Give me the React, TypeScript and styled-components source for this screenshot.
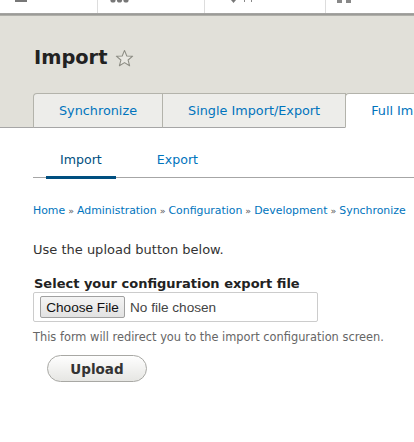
import React from 'react';
import styled, { createGlobalStyle } from 'styled-components';

const GlobalStyle = createGlobalStyle`
  html, body {
    margin: 0;
    padding: 0;
    background: #fff;
    overflow: hidden;
  }

  body {
    font-family: 'DejaVu Sans', Verdana, sans-serif;
    color: #333;
  }
`;

const Page = styled.div`
  width: 414px;
  min-height: 442px;
  overflow: hidden;
`;

// admin toolbar, scrolled so only its bottom edge shows
const Toolbar = styled.div`
  display: flex;
  height: 13px;
  background: #fff;
`;

const ToolbarItem = styled.div<{ $width: number }>`
  position: relative;
  flex: 0 0 ${(props) => props.$width}px;
  border-right: 1px solid #ddd;
  overflow: hidden;

  &:last-child {
    border-right: none;
    flex: 1;
  }

  svg {
    display: block;
  }
`;

const ToolbarShadow = styled.div`
  height: 3px;
  background: linear-gradient(#a9a9a6, #9b9b98 50%, #b9b9b2);
`;

const Header = styled.header`
  padding: 30px 0 0 33px;
  background: #e1e0d9;
  border-bottom: 1px solid #a6a6a6;
`;

const Title = styled.h1`
  display: flex;
  align-items: center;
  gap: 8px;

  margin: 0 0 23px 1px;

  font-size: 19.4px;
  line-height: 24px;
  font-weight: bold;
  color: #222;
`;

const PrimaryTabs = styled.nav`
  position: relative;
  display: flex;
  margin-bottom: -1px;
  white-space: nowrap;
`;

const PrimaryTab = styled.a<{ $active?: boolean; $first?: boolean }>`
  flex: none;
  padding: 0 25px;

  height: 33px;
  line-height: 33px;
  font-size: 12.8px;
  text-decoration: none;

  color: #0074bd;
  background: ${(props) => (props.$active ? '#fff' : '#ededea')};

  border: 1px solid #b3b3ab;
  border-left: ${(props) => (props.$first || props.$active ? '1px solid #b3b3ab' : 'none')};
  border-right: ${(props) => (props.$active ? 'none' : '1px solid #b3b3ab')};
  border-bottom: 1px solid ${(props) => (props.$active ? '#fff' : '#a6a6a6')};
  border-radius: ${(props) => (props.$first || props.$active ? '4px 0 0 0' : '0')};

  margin-left: ${(props) => (props.$active ? '-1px' : '0')};
`;

const Content = styled.main`
  padding: 0 0 0 33px;
`;

const SecondaryTabs = styled.nav`
  display: flex;
  gap: 27px;

  margin-top: 22px;
  padding-left: 13px;

  border-bottom: 1px solid #a6a6a6;
`;

const SecondaryTab = styled.a<{ $active?: boolean }>`
  position: relative;
  margin-bottom: -2px;
  padding: 0 14px 6px;

  font-size: 12.6px;
  line-height: 20px;
  text-decoration: none;

  color: ${(props) => (props.$active ? '#004f80' : '#0074bd')};
  border-bottom: 3px solid ${(props) => (props.$active ? '#004f80' : 'transparent')};
`;

const Breadcrumb = styled.nav`
  margin-top: 25px;

  font-size: 10.9px;
  line-height: 16px;
  white-space: nowrap;

  a {
    color: #0074bd;
    text-decoration: none;
  }
`;

const Separator = styled.span`
  margin: 0 3px;
  color: #555;
  font-size: 9.5px;
`;

const Intro = styled.p`
  margin: 22px 0 0;

  font-size: 13px;
  line-height: 18px;
`;

const FieldLabel = styled.label`
  display: block;
  margin: 16px 0 -1px 1px;

  font-size: 13px;
  line-height: 18px;
  font-weight: bold;
  color: #222;
`;

const FileBox = styled.div`
  display: flex;
  align-items: center;
  gap: 5px;

  box-sizing: border-box;
  width: 285px;
  height: 30px;
  padding: 0 6px;

  background: #fff;
  border: 1px solid #ccc;
  border-radius: 2px;

  font-family: 'Liberation Sans', Arial, sans-serif;
  font-size: 13.6px;
  color: #444;
`;

const ChooseButton = styled.span`
  box-sizing: border-box;
  display: flex;
  align-items: center;
  justify-content: center;

  width: 85px;
  height: 22px;

  background: linear-gradient(#f4f4f4, #e2e2e2);
  border: 1px solid #a0a0a0;
  border-radius: 2px;

  color: #111;
`;

const Description = styled.div`
  margin-top: 7px;

  font-size: 11.4px;
  line-height: 16px;
  color: #666;
  white-space: nowrap;
`;

const UploadButton = styled.button`
  box-sizing: border-box;
  width: 100px;
  height: 27px;
  margin: 10px 0 0 14px;
  padding: 0;

  font-family: 'DejaVu Sans', Verdana, sans-serif;
  font-size: 13.5px;
  font-weight: bold;
  color: #333;

  background: linear-gradient(#fefefe, #e6e6e3);
  border: 1px solid #a8a8a4;
  border-radius: 20px;
`;

const Star = () => (
  <svg width="19" height="19" viewBox="0 0 20 20">
    <path
      d="M10 1.5 L12.4 7.3 L18.6 7.6 L13.8 11.6 L15.4 17.7 L10 14.3 L4.6 17.7 L6.2 11.6 L1.4 7.6 L7.6 7.3 Z"
      fill="#e9e8e2"
      stroke="#8c8c83"
      strokeWidth="1.1"
      strokeLinejoin="round"
    />
  </svg>
);

function App() {
  const crumbs = ['Home', 'Administration', 'Configuration', 'Development', 'Synchronize'];

  return (
    <Page>
      <GlobalStyle />
      <Toolbar>
        <ToolbarItem $width={97}>
          <svg width="40" height="13">
            <rect x="15" y="0" width="12" height="2" fill="#777" />
          </svg>
        </ToolbarItem>
        <ToolbarItem $width={106}>
          <svg width="40" height="13">
            <circle cx="15" cy="0" r="2.6" fill="#777" />
            <circle cx="21.5" cy="0" r="2.6" fill="#777" />
            <circle cx="28" cy="0" r="2.6" fill="#777" />
          </svg>
        </ToolbarItem>
        <ToolbarItem $width={120}>
          <svg width="60" height="13">
            <path d="M26 0 L28.5 3 L31 0 Z" fill="#777" />
            <rect x="39" y="0" width="1" height="2" fill="#888" />
            <rect x="46" y="0" width="1" height="2" fill="#888" />
          </svg>
        </ToolbarItem>
        <ToolbarItem $width={89}>
          <svg width="40" height="13">
            <rect x="11" y="0" width="5" height="3" fill="#888" />
            <rect x="20" y="0" width="5" height="3" fill="#888" />
          </svg>
        </ToolbarItem>
      </Toolbar>
      <ToolbarShadow />

      <Header>
        <Title>
          Import
          <Star />
        </Title>
        <PrimaryTabs>
          <PrimaryTab href="#" $first>
            Synchronize
          </PrimaryTab>
          <PrimaryTab href="#">Single Import/Export</PrimaryTab>
          <PrimaryTab href="#" $active>
            Full Import/Export
          </PrimaryTab>
        </PrimaryTabs>
      </Header>

      <Content>
        <SecondaryTabs>
          <SecondaryTab href="#" $active>
            Import
          </SecondaryTab>
          <SecondaryTab href="#">Export</SecondaryTab>
        </SecondaryTabs>

        <Breadcrumb>
          {crumbs.map((crumb, i) => (
            <React.Fragment key={crumb}>
              {i > 0 && <Separator>»</Separator>}
              <a href="#">{crumb}</a>
            </React.Fragment>
          ))}
        </Breadcrumb>

        <Intro>Use the upload button below.</Intro>

        <FieldLabel>Select your configuration export file</FieldLabel>
        <FileBox>
          <ChooseButton>Choose File</ChooseButton>
          No file chosen
        </FileBox>
        <Description>This form will redirect you to the import configuration screen.</Description>

        <UploadButton type="button">Upload</UploadButton>
      </Content>
    </Page>
  );
}

export default App;
